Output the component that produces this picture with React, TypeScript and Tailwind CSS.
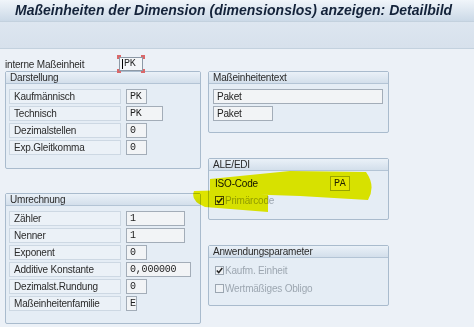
import React from 'react';

const Field: React.FC<{ value: string; w: number; sans?: boolean }> = ({ value, w, sans }) => (
    <div
        className={
            'h-[15px] border border-[#a3adb8] bg-[#f2f4f6] flex items-center px-[3px] text-[10px] text-[#222] leading-none ' +
            (sans ? "font-['Liberation_Sans',Arial,sans-serif]" : "font-['Liberation_Mono',monospace]")
        }
        style={{ width: w }}
    >
        {value}
    </div>
);

const Group: React.FC<{ title: string; h: number; children?: React.ReactNode }> = ({ title, h, children }) => (
    <div className="border border-[#a9bbcd] rounded-[2px] bg-[#e5edf5] flex flex-col" style={{ height: h }}>
        <div className="h-[12px] border-b border-[#b3c4d5] bg-gradient-to-b from-[#eaf1f8] to-[#d3dfeb] px-[4px] text-[10px] leading-[11px] text-[#2a2a2a]">
            {title}
        </div>
        {children}
    </div>
);

const LabelRow: React.FC<{ label: string; value: string; w: number }> = ({ label, value, w }) => (
    <div className="h-[17px] flex items-center">
        <div className="ml-[3px] w-[112px] h-[15px] border border-[#cdd8e3] bg-[#ebf1f7] px-[4px] flex items-center">
            {label}
        </div>
        <div className="ml-[5px]">
            <Field value={value} w={w} />
        </div>
    </div>
);

const Check: React.FC<{ checked: boolean; dark?: boolean }> = ({ checked, dark }) => (
    <div
        className={
            'w-[9px] h-[9px] border flex items-center justify-center ' +
            (dark ? 'border-[#4a4a4a] bg-[#f4f4f0]' : 'border-[#9ba6b1] bg-[#eef2f6]')
        }
    >
        {checked && (
            <svg width="7" height="7" viewBox="0 0 7 7">
                <path d="M0.8 3.6 L2.7 5.6 L6.3 1" fill="none" stroke="#222" strokeWidth="1.5" />
            </svg>
        )}
    </div>
);

const App: React.FC = () => {
    return (
        <div className="relative w-[474px] h-[327px] overflow-hidden bg-[#ecf1f7] font-['Liberation_Sans',Arial,sans-serif] text-[10px] text-[#2b2b2b] tracking-[-0.2px]">
            {/* title */}
            <div className="h-[21px] bg-gradient-to-b from-[#f0f5fa] to-[#cbd9e7] pl-[15px] flex items-center text-[14px] font-bold italic text-[#14233a] tracking-normal">
                Maßeinheiten der Dimension (dimensionslos) anzeigen: Detailbild
            </div>
            {/* toolbar */}
            <div className="h-[28px] bg-gradient-to-b from-[#dde6f0] to-[#d7e1ec] border-t border-[#c3d1de] border-b border-[#b4c3d2]" />

            <div className="pt-[8px] pl-[5px] flex flex-col">
                <div className="h-[14px] flex items-center">
                    <div className="w-[114px]">interne Maßeinheit</div>
                    <div className="relative">
                        <div className="w-[24px] h-[14px] border border-[#8d99a6] bg-[#f4f6f8] flex items-center pl-[2px] font-['Liberation_Mono',monospace] text-[10px] leading-none">
                            <span className="w-px h-[10px] bg-black mr-px" />
                            PK
                        </div>
                        <span className="absolute -left-[2px] -top-[2px] w-[4px] h-[4px] border-t-2 border-l-2 border-[#d9686a]" />
                        <span className="absolute -right-[2px] -top-[2px] w-[4px] h-[4px] border-t-2 border-r-2 border-[#d9686a]" />
                        <span className="absolute -left-[2px] -bottom-[2px] w-[4px] h-[4px] border-b-2 border-l-2 border-[#d9686a]" />
                        <span className="absolute -right-[2px] -bottom-[2px] w-[4px] h-[4px] border-b-2 border-r-2 border-[#d9686a]" />
                    </div>
                </div>

                <div className="flex gap-[7px]">
                    {/* left column */}
                    <div className="w-[196px] flex flex-col">
                        <Group title="Darstellung" h={98}>
                            <div className="pt-[4px] flex flex-col">
                                <LabelRow label="Kaufmännisch" value="PK" w={21} />
                                <LabelRow label="Technisch" value="PK" w={37} />
                                <LabelRow label="Dezimalstellen" value="0" w={21} />
                                <LabelRow label="Exp.Gleitkomma" value="0" w={21} />
                            </div>
                        </Group>
                        <div className="mt-[24px]">
                            <Group title="Umrechnung" h={131}>
                                <div className="pt-[4px] flex flex-col">
                                    <LabelRow label="Zähler" value="1" w={59} />
                                    <LabelRow label="Nenner" value="1" w={59} />
                                    <LabelRow label="Exponent" value="0" w={21} />
                                    <LabelRow label="Additive Konstante" value="0,000000" w={65} />
                                    <LabelRow label="Dezimalst.Rundung" value="0" w={21} />
                                    <LabelRow label="Maßeinheitenfamilie" value="E" w={11} />
                                </div>
                            </Group>
                        </div>
                    </div>

                    {/* right column */}
                    <div className="w-[181px] flex flex-col">
                        <Group title="Maßeinheitentext" h={62}>
                            <div className="pt-[5px] pl-[4px] flex flex-col gap-[2px]">
                                <Field value="Paket" w={170} sans />
                                <Field value="Paket" w={60} sans />
                            </div>
                        </Group>
                        <div className="mt-[25px]">
                            <Group title="ALE/EDI" h={62}>
                                <div className="pt-[4px] pl-[6px] flex flex-col">
                                    <div className="h-[17px] flex items-center">
                                        <div className="w-[115px] text-[#111]">ISO-Code</div>
                                        <Field value="PA" w={20} />
                                    </div>
                                    <div className="h-[17px] flex items-center gap-[1px]">
                                        <Check checked dark />
                                        <span className="text-[#9aa4ae]">Primärcode</span>
                                    </div>
                                </div>
                            </Group>
                        </div>
                        <div className="mt-[25px]">
                            <Group title="Anwendungsparameter" h={61}>
                                <div className="pt-[3px] pl-[6px] flex flex-col">
                                    <div className="h-[18px] flex items-center gap-[1px]">
                                        <Check checked />
                                        <span className="text-[#9da7b1]">Kaufm. Einheit</span>
                                    </div>
                                    <div className="h-[18px] flex items-center gap-[1px]">
                                        <Check checked={false} />
                                        <span className="text-[#9da7b1]">Wertmäßiges Obligo</span>
                                    </div>
                                </div>
                            </Group>
                        </div>
                    </div>
                </div>
            </div>

            {/* highlighter marks */}
            <svg className="absolute left-0 top-0 pointer-events-none mix-blend-multiply" width="474" height="327">
                <path d="M210 179 L290 171 L366 172 Q376 186 368 200 L300 196 L210 193 Z" fill="#f0f200" />
                <path d="M194 191 L232 190 L268 195 L268 212 L205 207 Q190 201 194 191 Z" fill="#f0f200" />
            </svg>
        </div>
    );
};

export default App;
